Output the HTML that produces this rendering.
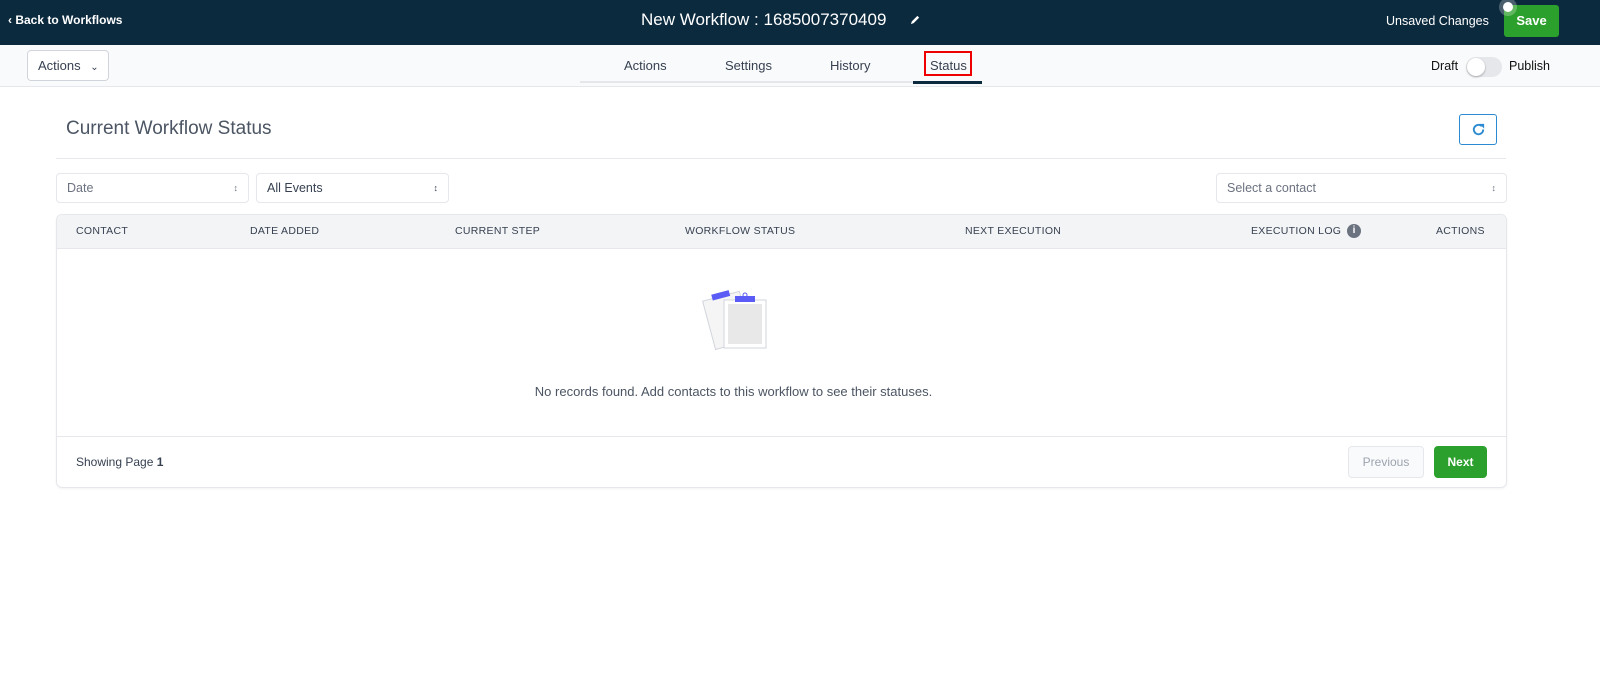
<!DOCTYPE html>
<html><head><meta charset="utf-8"><style>
*{box-sizing:border-box;margin:0;padding:0}
body{width:1600px;height:675px;background:#fff;font-family:"Liberation Sans",sans-serif;position:relative;overflow:hidden;color:#374151}
.abs{position:absolute}
.top{left:0;top:0;width:1600px;height:45px;background:#0c2a3e;color:#fff}
.sub{left:0;top:45px;width:1600px;height:42px;background:#f9fafb;border-bottom:1px solid #e5e7eb}
.tab{top:58px;font-size:13px;color:#374151}
.sel{height:30px;border:1px solid #e5e7eb;border-radius:4px;font-size:12.5px;color:#6b7280;padding:0 10px;line-height:28px;background:#fff}
.th{top:225px;font-size:10.5px;letter-spacing:.3px;color:#374151}
</style></head><body>
<div class="abs top">
  <div class="abs" style="left:8px;top:13px;font-size:12px;font-weight:bold">&lsaquo; Back to Workflows</div>
  <div class="abs" style="left:641px;top:10px;font-size:17px">New Workflow : 1685007370409</div>
  <svg class="abs" style="left:910px;top:14px" width="11" height="11" viewBox="0 0 12 12"><path d="M1 11l1-3 6-6 2 2-6 6z" fill="#fff"/></svg>
  <div class="abs" style="left:1386px;top:14px;font-size:12.5px">Unsaved Changes</div>
  <div class="abs" style="left:1504px;top:5px;width:55px;height:32px;background:#2ca02c;border-radius:3px;font-size:13px;font-weight:bold;text-align:center;line-height:32px">Save</div>
  <div class="abs" style="left:1503px;top:2px;width:10px;height:10px;border-radius:50%;background:#fff;box-shadow:0 0 0 4px rgba(255,255,255,.25)"></div>
</div>
<div class="abs sub">
  <div class="abs" style="left:27px;top:5px;width:82px;height:31px;border:1px solid #d1d5db;border-radius:4px;background:#fff;font-size:13px;line-height:29px;padding-left:10px;color:#374151">Actions <span style="font-size:10px;margin-left:6px">&#8964;</span></div>
  <div class="abs" style="left:580px;top:36px;width:400px;height:2px;background:#e5e7eb"></div>
  <div class="abs" style="left:913px;top:36px;width:69px;height:3px;background:#0c2a3e"></div>
  <div class="abs" style="left:1431px;top:14px;font-size:12.5px;color:#111">Draft</div>
  <div class="abs" style="left:1466px;top:12px;width:36px;height:20px;border-radius:10px;background:#e5e7eb"><div style="position:absolute;left:1px;top:1px;width:18px;height:18px;border-radius:50%;background:#fff;box-shadow:0 1px 2px rgba(0,0,0,.3)"></div></div>
  <div class="abs" style="left:1509px;top:14px;font-size:12.5px;color:#111">Publish</div>
</div>
<div class="abs tab" style="left:624px">Actions</div>
<div class="abs tab" style="left:725px">Settings</div>
<div class="abs tab" style="left:830px">History</div>
<div class="abs" style="left:924px;top:51px;width:48px;height:25px;border:2px solid #e00"></div>
<div class="abs tab" style="left:930px">Status</div>

<div class="abs" style="left:66px;top:118px;font-size:19px;color:#4b5563">Current Workflow Status</div>
<div class="abs" style="left:1459px;top:114px;width:38px;height:31px;border:1px solid #2b8ad1;border-radius:3px">
<svg style="position:absolute;left:11px;top:7px" width="15" height="15" viewBox="0 0 16 16"><path d="M13 8a5 5 0 1 1-1.5-3.5" fill="none" stroke="#2b8ad1" stroke-width="2"/><path d="M9 2h5v5z" fill="#2b8ad1"/></svg></div>
<div class="abs" style="left:56px;top:158px;width:1450px;height:1px;background:#e5e7eb"></div>

<div class="abs sel" style="left:56px;top:173px;width:193px">Date<span style="position:absolute;right:10px;top:0;font-size:9px">&#8597;</span></div>
<div class="abs sel" style="left:256px;top:173px;width:193px;color:#374151">All Events<span style="position:absolute;right:10px;top:0;font-size:9px">&#8597;</span></div>
<div class="abs sel" style="left:1216px;top:173px;width:291px">Select a contact<span style="position:absolute;right:10px;top:0;font-size:9px">&#8597;</span></div>

<div class="abs" style="left:56px;top:214px;width:1451px;height:274px;border:1px solid #e5e7eb;border-radius:6px;box-shadow:0 1px 2px rgba(0,0,0,.05)">
  <div style="height:34px;background:#f3f4f6;border-bottom:1px solid #e5e7eb;border-radius:6px 6px 0 0"></div>
  <div style="position:absolute;left:0;top:221px;width:100%;height:1px;background:#e5e7eb"></div>
</div>
<div class="abs th" style="left:76px">CONTACT</div>
<div class="abs th" style="left:250px">DATE ADDED</div>
<div class="abs th" style="left:455px">CURRENT STEP</div>
<div class="abs th" style="left:685px">WORKFLOW STATUS</div>
<div class="abs th" style="left:965px">NEXT EXECUTION</div>
<div class="abs th" style="left:1251px">EXECUTION LOG</div>
<div class="abs" style="left:1347px;top:224px;width:14px;height:14px;border-radius:50%;background:#6b7280;color:#fff;font-size:10px;font-weight:bold;text-align:center;line-height:14px">i</div>
<div class="abs th" style="left:1436px">ACTIONS</div>

<svg class="abs" style="left:700px;top:284px" width="70" height="66" viewBox="0 0 70 66">
<g transform="rotate(-15 25 35)"><rect x="8" y="12" width="38" height="50" fill="#f5f5f5" stroke="#d1d5db"/><rect x="18" y="8" width="18" height="6" fill="#5b5bf5"/></g>
<rect x="24" y="16" width="42" height="48" fill="#fff" stroke="#d1d5db"/>
<rect x="28" y="20" width="34" height="40" fill="#e8e8e8"/>
<rect x="35" y="12" width="20" height="6" fill="#5b5bf5"/>
<circle cx="45" cy="11" r="2" fill="none" stroke="#5b5bf5"/>
</svg>
<div class="abs" style="left:0;width:1467px;top:384px;text-align:center;font-size:13px;color:#4b5563">No records found. Add contacts to this workflow to see their statuses.</div>

<div class="abs" style="left:76px;top:455px;font-size:12px;color:#374151">Showing Page <b>1</b></div>
<div class="abs" style="left:1348px;top:446px;width:76px;height:32px;border:1px solid #e5e7eb;border-radius:4px;font-size:12px;color:#9ca3af;text-align:center;line-height:30px;background:#f9fafb">Previous</div>
<div class="abs" style="left:1434px;top:446px;width:53px;height:32px;border-radius:4px;background:#2ca02c;color:#fff;font-size:12px;font-weight:bold;text-align:center;line-height:32px">Next</div>
</body></html>
